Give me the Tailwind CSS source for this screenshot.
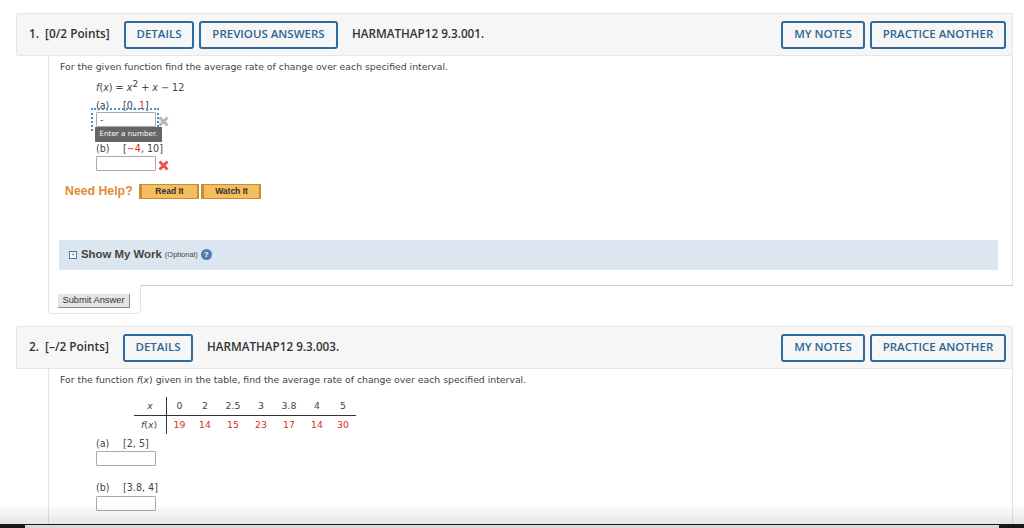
<!DOCTYPE html>
<html lang="en">
<head>
    <meta charset="UTF-8">
    <title>Homework</title>
    <script src="https://cdn.jsdelivr.net/npm/@tailwindcss/browser@4"></script>
</head>
<body class="relative h-[528px] w-[1024px] overflow-hidden bg-white font-['DejaVu_Sans',sans-serif] text-[9.3px] text-[#444]">

    <!-- Question 1 -->
    <section class="pt-[13px]">
        <div class="ml-4 flex h-[43px] w-[997px] items-center rounded-[2px] border border-[#e6e6e6] bg-[#f6f6f6] pl-[12px] pr-[6px] font-['Open_Sans',sans-serif] text-[11.5px] font-semibold text-[#333]">
            <span class="w-[95px] -translate-y-px whitespace-pre text-[11.8px]">1.  [0/2 Points]</span>
            <span class="flex h-[28px] w-[70px] items-center justify-center rounded-[3px] border-2 border-[#2f6a9f] pb-px text-[#2c6697]">DETAILS</span>
            <span class="ml-[5px] flex h-[28px] w-[139px] items-center justify-center rounded-[3px] border-2 border-[#2f6a9f] pb-px text-[#2c6697]">PREVIOUS ANSWERS</span>
            <span class="ml-[14px] -translate-y-px text-[11.7px]">HARMATHAP12 9.3.001.</span>
            <span class="ml-auto flex h-[28px] w-[84px] items-center justify-center rounded-[3px] border-2 border-[#2f6a9f] pb-px text-[#2c6697]">MY NOTES</span>
            <span class="ml-[5px] flex h-[28px] w-[136px] items-center justify-center rounded-[3px] border-2 border-[#2f6a9f] pb-px text-[#2c6697]">PRACTICE ANOTHER</span>
        </div>
        <div class="ml-[48px] h-[229px] w-[965px] border-x border-[#e4e4e4] pl-[11px] pt-[5px]">
            <p class="h-[15px] leading-[12px]">For the given function find the average rate of change over each specified interval.</p>
            <div class="pl-[36px]">
                <p class="mt-[4px] h-[16px] text-[9.6px] leading-[16px]"><i>f</i>(<i>x</i>) = <i>x</i><sup class="text-[9px]">2</sup> + <i>x</i> − 12</p>
                <p class="mt-[4px] flex h-[12px] text-[9.6px] leading-[12px]"><span class="w-[27px]">(a)</span><span>[0, <span class="text-[#e02b20]">1</span>]</span></p>
                <div class="relative h-[31px]">
                    <!-- focus outline and validation tooltip -->
                    <div class="absolute -left-[5px] -top-[4px] h-[23px] w-[68px] border-2 border-b-0 border-dotted border-[#4a90d9]"></div>
                    <div class="relative flex items-start">
                        <div class="flex h-[15px] w-[60px] items-center rounded-[1px] border border-[#aaa] bg-white pl-[3px]">-</div>
                        <svg class="ml-[2px] mt-[4px]" width="11" height="11" viewBox="0 0 11 11"><path d="M1.5 1.5l8 8M9.5 1.5l-8 8" stroke="#b8b8b8" stroke-width="3"/></svg>
                    </div>
                    <div class="absolute -left-px top-[15px] flex h-[15px] w-[67px] items-center justify-center bg-[#666] text-[7.2px] text-white">Enter a number.</div>
                </div>
                <p class="flex h-[12px] text-[9.6px] leading-[12px]"><span class="w-[27px]">(b)</span><span>[<span class="text-[#e02b20]">−4</span>, 10]</span></p>
                <div class="mt-[1px] flex items-start">
                    <div class="h-[15px] w-[60px] rounded-[1px] border border-[#aaa] bg-white"></div>
                    <svg class="ml-[2px] mt-[4px]" width="11" height="11" viewBox="0 0 11 11"><path d="M1.5 1.5l8 8M9.5 1.5l-8 8" stroke="#e2554f" stroke-width="3"/></svg>
                </div>
            </div>
            <div class="mt-[13px] flex h-[15px] items-center pl-[5px] font-['Liberation_Sans',sans-serif]">
                <span class="w-[67px] whitespace-nowrap text-[12.3px] font-bold text-[#e38a35]">Need Help?</span>
                <span class="ml-[7px] flex h-[15px] w-[60px] items-center justify-center border border-[#c98a3a] border-l-[3px] border-r-[2px] bg-[#f5bd5c] text-[8.5px] font-bold text-[#333]">Read It</span>
                <span class="ml-[2px] flex h-[15px] w-[60px] items-center justify-center border border-[#c98a3a] border-l-[3px] border-r-[2px] bg-[#f5bd5c] text-[8.5px] font-bold text-[#333]">Watch It</span>
            </div>
            <div class="-ml-px mr-[14px] mt-[41px] flex h-[30px] items-center bg-[#dce6f0] pb-px pl-[10px] font-['Liberation_Sans',sans-serif] text-[#444]">
                <span class="flex h-[8px] w-[8px] items-center justify-center border border-[#4d7ca8] bg-white text-[7px] leading-none text-[#4d7ca8]">+</span>
                <span class="ml-[4px] text-[11.4px] font-bold">Show My Work</span>
                <span class="ml-[3px] text-[7.5px]">(Optional)</span>
                <span class="ml-[3px] flex h-[11px] w-[11px] items-center justify-center rounded-full bg-[#4f7cb5] text-[8px] font-bold leading-none text-white">?</span>
            </div>
        </div>
        <!-- submit tab -->
        <div class="ml-[48px] flex w-[965px]">
            <div class="h-[29px] w-[93px] rounded-b-[4px] border-x border-b border-[#e4e4e4] pl-[9px] pt-[9px]">
                <span class="flex h-[14px] w-[72px] items-center justify-center border-b border-r border-[#888] bg-[#e4e4e4] font-['Liberation_Sans',sans-serif] text-[9.3px] text-[#333]">Submit Answer</span>
            </div>
            <div class="flex-1 border-t border-[#c9c9c9]"></div>
        </div>
    </section>

    <!-- Question 2 -->
    <section class="pt-[12px]">
        <div class="ml-4 flex h-[43px] w-[997px] items-center rounded-[2px] border border-[#e6e6e6] bg-[#f6f6f6] pl-[12px] pr-[6px] font-['Open_Sans',sans-serif] text-[11.5px] font-semibold text-[#333]">
            <span class="w-[94px] -translate-y-px whitespace-pre text-[11.8px]">2.  [–/2 Points]</span>
            <span class="flex h-[28px] w-[70px] items-center justify-center rounded-[3px] border-2 border-[#2f6a9f] pb-px text-[#2c6697]">DETAILS</span>
            <span class="ml-[14px] -translate-y-px text-[11.7px]">HARMATHAP12 9.3.003.</span>
            <span class="ml-auto flex h-[28px] w-[84px] items-center justify-center rounded-[3px] border-2 border-[#2f6a9f] pb-px text-[#2c6697]">MY NOTES</span>
            <span class="ml-[5px] flex h-[28px] w-[136px] items-center justify-center rounded-[3px] border-2 border-[#2f6a9f] pb-px text-[#2c6697]">PRACTICE ANOTHER</span>
        </div>
        <div class="ml-[48px] h-[160px] w-[965px] border-x border-[#e4e4e4] pl-[11px] pt-[5px]">
            <p class="h-[12px] leading-[12px]">For the function <i>f</i>(<i>x</i>) given in the table, find the average rate of change over each specified interval.</p>
            <div class="ml-[74px] mt-[11px] w-[222px]">
                <div class="flex h-[19px] items-center border-b border-[#333]">
                    <span class="flex h-full w-[32px] items-center justify-center"><i>x</i></span>
                    <span class="h-full w-[26px] border-l border-[#333] text-center leading-[18px]">0</span>
                    <span class="w-[26px] text-center">2</span>
                    <span class="w-[30px] text-center">2.5</span>
                    <span class="w-[26px] text-center">3</span>
                    <span class="w-[30px] text-center">3.8</span>
                    <span class="w-[26px] text-center">4</span>
                    <span class="w-[26px] text-center">5</span>
                </div>
                <div class="flex h-[19px] items-center pb-px text-[#e02b20]">
                    <span class="w-[32px] pl-[7px] text-[#444]"><i>f</i>(<i>x</i>)</span>
                    <span class="h-full w-[26px] border-l border-[#333] text-center leading-[18px]">19</span>
                    <span class="w-[26px] text-center">14</span>
                    <span class="w-[30px] text-center">15</span>
                    <span class="w-[26px] text-center">23</span>
                    <span class="w-[30px] text-center">17</span>
                    <span class="w-[26px] text-center">14</span>
                    <span class="w-[26px] text-center">30</span>
                </div>
            </div>
            <div class="pl-[36px]">
                <p class="mt-[3px] flex h-[12px] text-[9.6px] leading-[12px]"><span class="w-[27px]">(a)</span><span>[2, 5]</span></p>
                <div class="mt-[1px] h-[15px] w-[60px] rounded-[1px] border border-[#aaa] bg-white"></div>
                <p class="mt-[16px] flex h-[12px] text-[9.6px] leading-[12px]"><span class="w-[27px]">(b)</span><span>[3.8, 4]</span></p>
                <div class="mt-[2px] h-[15px] w-[60px] rounded-[1px] border border-[#aaa] bg-white"></div>
            </div>
        </div>
    </section>

    <!-- window edge along the bottom of the capture -->
    <div class="absolute inset-x-0 bottom-[4px] h-[20px] bg-gradient-to-b from-white/0 to-black/10"></div>
    <div class="absolute inset-x-0 bottom-0 h-[4px] bg-[#1c1712] px-[25px] pt-[1px]">
        <div class="h-[3px] bg-[#d9d9d9]"></div>
    </div>
</body>
</html>
